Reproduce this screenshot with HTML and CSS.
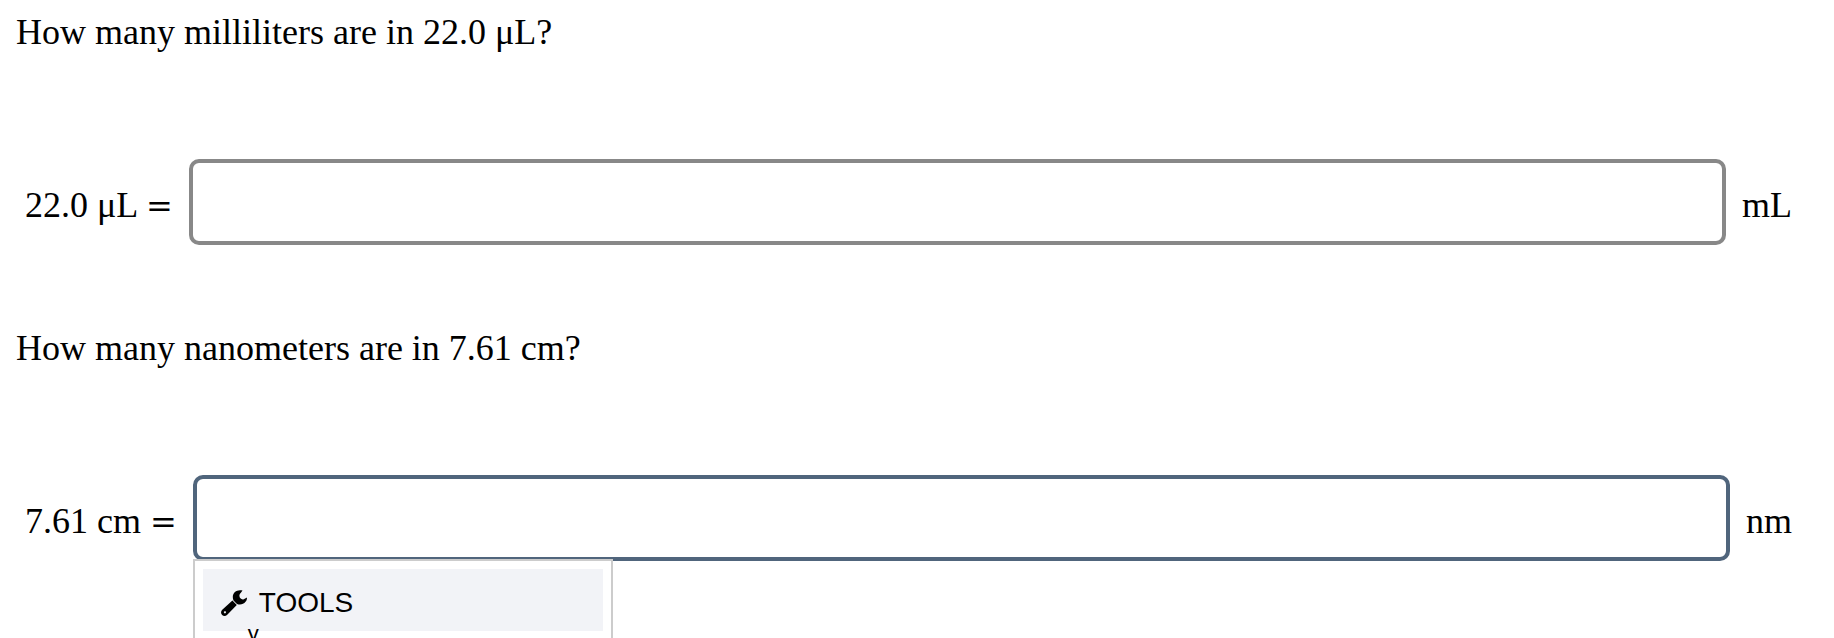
FILE: index.html
```html
<!DOCTYPE html>
<html lang="en">
<head>
    <meta charset="UTF-8">
    <meta name="viewport" content="width=device-width, initial-scale=1.0">
    <title>Unit conversions</title>
    <link rel="stylesheet" href="styles.css">
</head>
<body>
    <div class="question">
        <p class="prompt">How many milliliters are in 22.0 μL?</p>
        <div class="answer-row">
            <label for="milliliters">22.0 μL <span class="equals">=</span></label>
            <div class="field">
                <input type="text" id="milliliters" class="answer" autocomplete="off">
            </div>
            <span class="unit">mL</span>
        </div>
    </div>

    <div class="question">
        <p class="prompt">How many nanometers are in 7.61 cm?</p>
        <div class="answer-row">
            <label for="nanometers">7.61 cm <span class="equals">=</span></label>
            <div class="field">
                <input type="text" id="nanometers" class="answer active" autocomplete="off">
                <!-- Tools menu under the active field -->
                <div class="tools-menu">
                    <button type="button" class="tools-button">
                        <svg class="wrench" viewBox="0 0 26 26" aria-hidden="true">
                            <path fill-rule="evenodd" d="M21.500.6C16.500-.8 11.900 2.200 11.800 7c0 1.300.2 2.300.7 3.400l3.500 3.600c3.200 1.200 6.500.4 8.500-2.200 1-1.300 1.500-2.600 1.500-4.400l-3.700 2c-2.100.3-3.900-1.300-3.900-3.600 0-1.200.5-2.200 1.300-2.900zM11.400 10.600l4.400 4.500L6 25c-1.400 1.300-3.500 1.300-4.900 0-1.400-1.400-1.400-3.500-.1-4.900zM3.900 21.200a1 1 0 1 0 .1 0z"/>
                        </svg>
                        TOOLS
                    </button>
                    <button type="button" class="power-button" aria-label="Exponent"><span>x</span><sup>y</sup></button>
                </div>
            </div>
            <span class="unit">nm</span>
        </div>
    </div>
</body>
</html>
```
FILE: styles.css
```css
* {
    box-sizing: border-box;
}
body {
    margin: 0;
    height: 100vh;
    overflow: hidden;
    background: #fff;
    color: #000;
    font-family: "Liberation Serif", "Times New Roman", serif;
    font-size: 36px;
    line-height: 42px;
}
.question {
    padding: 11px 42px 71px 16px;
}
.prompt {
    margin: 0 0 106px;
}
.answer-row {
    display: flex;
    align-items: center;
    gap: 16px;
    padding-left: 9px;
}
.answer-row label,
.unit {
    padding-top: 5px;
}
.equals {
    font-family: "DejaVu Serif", serif;
    font-size: 32px;
    line-height: 1;
}
.field {
    position: relative;
    flex: 1;
    display: flex;
}
.answer {
    width: 100%;
    height: 86px;
    padding: 0 16px;
    border: 4px solid #888;
    border-radius: 10px;
    background: #fff;
    font: inherit;
    outline: none;
}
.answer.active {
    border-color: #50657c;
}
.tools-menu {
    position: absolute;
    top: 84px;
    left: 0;
    width: 420px;
    padding: 8px;
    border: 2px solid #ccc;
    background: #fff;
}
.tools-button {
    display: flex;
    align-items: center;
    gap: 12px;
    width: 100%;
    height: 62px;
    padding: 6px 18px 0;
    border: 0;
    background: #f2f3f7;
    color: #000;
    font-family: "Liberation Sans", Arial, sans-serif;
    font-size: 28px;
}
.wrench {
    width: 26px;
    height: 26px;
}
.power-button {
    display: flex;
    align-items: flex-end;
    padding: 0 31px;
    border: 0;
    background: none;
    color: #000;
    font-family: "Liberation Sans", Arial, sans-serif;
    font-size: 28px;
    line-height: 48px;
}
.power-button sup {
    margin-top: -8px;
    align-self: flex-start;
    font-size: 22px;
    line-height: 22px;
}
```
